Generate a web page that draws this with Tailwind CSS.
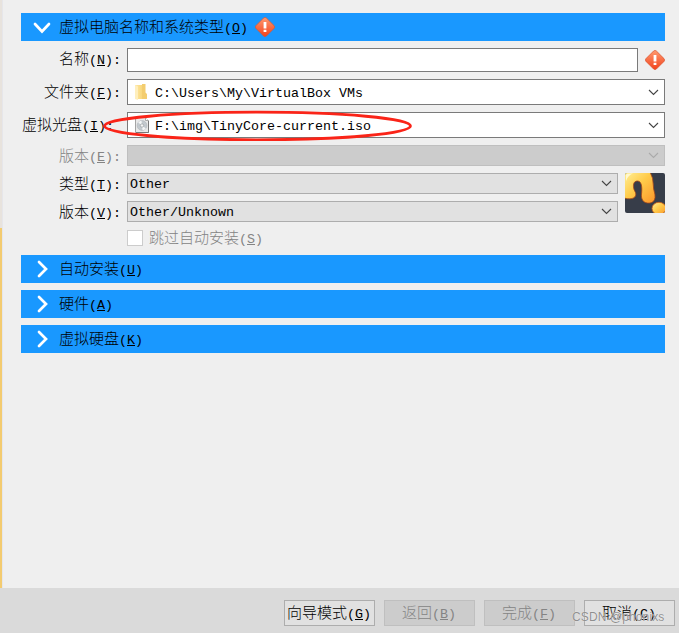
<!DOCTYPE html>
<html lang="zh-CN">
<head>
<meta charset="utf-8">
<title>VirtualBox</title>
<script src="https://cdn.jsdelivr.net/npm/@tailwindcss/browser@4"></script>
</head>
<body class="bg-white">
<svg class="absolute size-0">
  <defs>
    <linearGradient id="warn" x1="0" y1="0" x2="0" y2="1"><stop offset="0" stop-color="#ff9a70"/><stop offset="1" stop-color="#f2421c"/></linearGradient>
    <linearGradient id="gold" x1="0" y1="0" x2="1" y2="1"><stop offset="0" stop-color="#fff19a"/><stop offset=".45" stop-color="#ffcb4a"/><stop offset="1" stop-color="#fb952a"/></linearGradient>
    <linearGradient id="folder" x1="0" y1="0" x2="1" y2="0"><stop offset="0" stop-color="#ffe9a6"/><stop offset="1" stop-color="#f6d272"/></linearGradient>
    <symbol id="alert" viewBox="0 0 20 20">
      <path d="M8.6 1 Q10 -.2 11.4 1 L19 8.6 Q20.2 10 19 11.4 L11.4 19 Q10 20.2 8.6 19 L1 11.4 Q-.2 10 1 8.6Z" fill="url(#warn)" stroke="#d9542f" stroke-width=".7"/>
      <path d="M8.6 5h2.8v6.5H8.6zM8.6 12.7h2.8v2.4H8.6z" fill="#fff"/>
    </symbol>
    <symbol id="right" viewBox="0 0 12 18"><path d="M2 2 L9 9 L2 16" fill="none" stroke="#fff" stroke-width="2.7" stroke-linecap="round"/></symbol>
    <symbol id="drop" viewBox="0 0 11 7"><path d="M1 1 L5.5 5.5 L10 1" fill="none" stroke="currentColor" stroke-width="1.1"/></symbol>
  </defs>
</svg>
<div class="flex h-[633px] w-[679px] flex-col overflow-hidden bg-[#efefef] font-['Liberation_Sans','Noto_Sans_CJK_SC',sans-serif] text-[15px] leading-5 font-light text-black">
  <div class="flex h-[588px]">
    <div class="flex w-[3px] flex-col border-r border-[#e6e6ea]"><div class="h-[228px] bg-[#e8e3dd]"></div><div class="flex-1 bg-[#f3cb70]"></div></div>
    <main class="ml-[18px] w-[644px] pt-[13px]">
      <div class="flex h-7 items-center bg-[#1998ff] pl-3">
        <svg class="mt-0.5 h-3 w-[18px]" viewBox="0 0 18 12"><path d="M2 2 L9 9.5 L16 2" fill="none" stroke="#fff" stroke-width="2.7" stroke-linecap="round"/></svg>
        <span class="ml-[8px] pt-0.5 whitespace-nowrap">虚拟电脑名称和系统类型<span class="font-['Liberation_Mono',monospace] text-[13.33px]">(<u>O</u>)</span></span>
        <svg class="ml-[7px] size-5"><use href="#alert"/></svg>
      </div>
      <div class="mt-[7px] flex h-6 items-center">
        <label class="flex w-[100px] justify-end whitespace-nowrap"><span>名称<span class="font-['Liberation_Mono',monospace] text-[13.33px]">(<u>N</u>):</span></span></label>
        <div class="ml-[6px] h-6 w-[511px] border border-[#7a7a7a] bg-white"></div>
        <svg class="ml-[7px] size-5"><use href="#alert"/></svg>
      </div>
      <div class="mt-[7px] flex h-[26px] items-center">
        <label class="flex w-[100px] justify-end pt-0.5 whitespace-nowrap"><span>文件夹<span class="font-['Liberation_Mono',monospace] text-[13.33px]">(<u>F</u>):</span></span></label>
        <div class="ml-[6px] flex h-[26px] flex-1 items-center border border-[#7a7a7a] bg-white pr-[5px] pl-[6px]">
          <svg class="h-4 w-[14px]" viewBox="0 0 14 16"><path d="M1 1h9v14H1z" fill="url(#folder)"/><path d="M8 0h3.5v8.5L13 10v5H8z" fill="#f3cd70"/><path d="M1 1l3 1.5V16l-3-1z" fill="#ffefbd"/></svg>
          <span class="mt-1 ml-[7px] font-['Liberation_Mono',monospace] text-[13.33px]">C:\Users\My\VirtualBox VMs</span>
          <svg class="ml-auto h-[7px] w-[11px] text-[#444]"><use href="#drop"/></svg>
        </div>
      </div>
      <div class="relative mt-[7px] flex h-[26px] items-center">
        <label class="flex w-[100px] justify-end pt-0.5 pr-[7px] whitespace-nowrap"><span>虚拟光盘<span class="font-['Liberation_Mono',monospace] text-[13.33px]">(<u>I</u>):</span></span></label>
        <div class="ml-[6px] flex h-[26px] flex-1 items-center border border-[#7a7a7a] bg-white pr-[5px] pl-[7px]">
          <svg class="h-4 w-[14px]" viewBox="0 0 14 16"><path d="M.5.5h10l3 3v12H.5z" fill="#e9e9e9" stroke="#a4a4a4"/><path d="M13.5 4v11.5H1" fill="none" stroke="#777"/><path d="M10.5.5v3h3" fill="#fff" stroke="#aaa"/><circle cx="7" cy="8.5" r="4.9" fill="#c3c9ce" stroke="#aeb3b8" stroke-width=".6"/><path d="M7 8.5L3.2 5.6A4.8 4.8 0 0 1 6.5 3.8zM7 8.5l3.8 2.9A4.8 4.8 0 0 1 7.5 13.2z" fill="#f5f6f7"/><circle cx="7" cy="8.5" r="1.7" fill="#f4f4f4" stroke="#989da2" stroke-width=".7"/></svg>
          <span class="mt-1 ml-[6px] font-['Liberation_Mono',monospace] text-[13.33px]">F:\img\TinyCore-current.iso</span>
          <svg class="ml-auto h-[7px] w-[11px] text-[#444]"><use href="#drop"/></svg>
        </div>
        <svg class="absolute top-[-3px] left-[82px] h-8 w-[310px]" viewBox="0 0 310 32"><ellipse cx="154.5" cy="17" rx="153" ry="13.8" fill="none" stroke="#fa2418" stroke-width="2.8"/></svg>
      </div>
      <div class="mt-[7px] flex h-[21px] items-center">
        <label class="flex w-[100px] justify-end pt-0.5 whitespace-nowrap text-[#848484]"><span>版本<span class="font-['Liberation_Mono',monospace] text-[13.33px]">(<u>E</u>):</span></span></label>
        <div class="ml-[6px] flex h-[21px] flex-1 items-center justify-end border border-[#bfbfbf] bg-[#ccc] pr-[5px]"><svg class="h-[7px] w-[11px] text-[#aaa]"><use href="#drop"/></svg></div>
      </div>
      <div class="mt-[7px] flex">
        <div class="w-[597px]">
          <div class="flex h-[21px] items-center">
            <label class="flex w-[100px] justify-end pt-0.5 whitespace-nowrap"><span>类型<span class="font-['Liberation_Mono',monospace] text-[13.33px]">(<u>T</u>):</span></span></label>
            <div class="ml-[6px] flex h-[21px] flex-1 items-center justify-between border border-[#adadad] bg-[#e1e1e1] pr-[5px] pl-[2px]"><span class="mt-0.5 font-['Liberation_Mono',monospace] text-[13.33px]">Other</span><svg class="h-[7px] w-[11px] text-[#444]"><use href="#drop"/></svg></div>
          </div>
          <div class="mt-[7px] flex h-[21px] items-center">
            <label class="flex w-[100px] justify-end pt-0.5 whitespace-nowrap"><span>版本<span class="font-['Liberation_Mono',monospace] text-[13.33px]">(<u>V</u>):</span></span></label>
            <div class="ml-[6px] flex h-[21px] flex-1 items-center justify-between border border-[#adadad] bg-[#e1e1e1] pr-[5px] pl-[2px]"><span class="mt-0.5 font-['Liberation_Mono',monospace] text-[13.33px]">Other/Unknown</span><svg class="h-[7px] w-[11px] text-[#444]"><use href="#drop"/></svg></div>
          </div>
        </div>
        <svg class="ml-[7px] size-10 rounded-[2px] bg-[#373d49]" viewBox="0 0 40 40">
          <path d="M-1 -1H25Q28.5 5 28.3 12C28.3 18 30.5 20 30 24.5C29.5 29 26 30.5 22.500 30C18 29.500 16 26 16.500 21C17 17 17.500 8 12.500 8C8 8 8 13 9 16.500C10 19 11.500 20 10.500 23C9 26 4 26.500 -1 25Z" fill="url(#gold)" stroke="#a5481a" stroke-width=".8"/>
          <ellipse cx="34" cy="35.500" rx="7" ry="6.200" fill="url(#gold)" stroke="#c85b16" stroke-width=".8"/>
          <path d="M1 1.500Q3 0 8 .5Q3 2 1 8z" fill="#fff8d0"/>
        </svg>
      </div>
      <div class="mt-[8px] flex h-4 items-center pl-[106px] text-[#848484]">
        <div class="size-4 border border-[#ccc] bg-white"></div>
        <span class="ml-[6px] pt-0.5 whitespace-nowrap">跳过自动安装<span class="font-['Liberation_Mono',monospace] text-[13.33px]">(<u>S</u>)</span></span>
      </div>
      <div class="mt-[9px] flex flex-col gap-[7px]">
        <div class="flex h-7 items-center bg-[#1998ff] pl-4"><svg class="h-[18px] w-3"><use href="#right"/></svg><span class="ml-[10px] pt-0.5">自动安装<span class="font-['Liberation_Mono',monospace] text-[13.33px]">(<u>U</u>)</span></span></div>
        <div class="flex h-7 items-center bg-[#1998ff] pl-4"><svg class="h-[18px] w-3"><use href="#right"/></svg><span class="ml-[10px] pt-0.5">硬件<span class="font-['Liberation_Mono',monospace] text-[13.33px]">(<u>A</u>)</span></span></div>
        <div class="flex h-7 items-center bg-[#1998ff] pl-4"><svg class="h-[18px] w-3"><use href="#right"/></svg><span class="ml-[10px] pt-0.5">虚拟硬盘<span class="font-['Liberation_Mono',monospace] text-[13.33px]">(<u>K</u>)</span></span></div>
      </div>
    </main>
  </div>
  <footer class="relative flex h-[45px] justify-end gap-[9px] bg-[#dadada] pt-3 pr-1 text-center whitespace-nowrap">
    <button class="h-[26px] w-[91px] border border-[#adadad] bg-[#e1e1e1] pt-0.5 pr-px">向导模式<span class="font-['Liberation_Mono',monospace] text-[13.33px]">(<u>G</u>)</span></button>
    <button class="h-[26px] w-[91px] border border-[#bfbfbf] bg-[#ccc] pt-0.5 pr-px text-[#848484]">返回<span class="font-['Liberation_Mono',monospace] text-[13.33px]">(<u>B</u>)</span></button>
    <button class="h-[26px] w-[91px] border border-[#bfbfbf] bg-[#ccc] pt-0.5 pr-px text-[#848484]">完成<span class="font-['Liberation_Mono',monospace] text-[13.33px]">(<u>F</u>)</span></button>
    <button class="h-[26px] w-[91px] border border-[#adadad] bg-[#e1e1e1] pt-0.5 pr-px">取消<span class="font-['Liberation_Mono',monospace] text-[13.33px]">(<u>C</u>)</span></button>
    <span class="absolute top-[19px] left-[572px] text-[12px] leading-5 font-normal tracking-[0.12px] text-[#8f8f8f] [text-shadow:0_0_1px_white]">CSDN @phonixs</span>
  </footer>
</div>
</body>
</html>
